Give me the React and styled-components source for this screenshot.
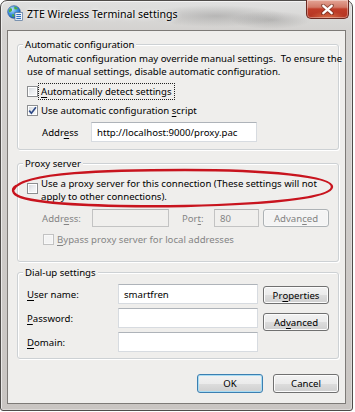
import React from "react";
import styled, { createGlobalStyle } from "styled-components";

const FONT = `"Noto Sans", "Liberation Sans", sans-serif`;

const GlobalStyle = createGlobalStyle`
  html, body { margin: 0; padding: 0; background: #ffffff; }
  body { font-family: ${FONT}; color: #000; }
  * { box-sizing: border-box; }
  u { text-decoration-thickness: 1px; text-underline-offset: 1.5px; }
`;

const Window = styled.div`
  position: relative;
  width: 353px;
  height: 411px;
  display: flex;
  flex-direction: column;
  padding: 0 6px 6px;
  border: 1px solid #4f4c4a;
  border-radius: 7px 7px 3px 3px;
  background:
    radial-gradient(ellipse 70px 11px at 215px 15px, rgba(110, 110, 110, 0.32), transparent),
    radial-gradient(ellipse 40px 9px at 270px 19px, rgba(100, 100, 100, 0.28), transparent),
    linear-gradient(to bottom, #e0e0e0 0px, #d3d1cf 30px, #c9c5c2 100%);
  box-shadow: inset 1px 1px 0 rgba(255, 255, 255, 0.6), inset -1px -1px 0 rgba(255, 255, 255, 0.35);
`;

const TitleBar = styled.div`
  flex: none;
  height: 29px;
  display: flex;
  align-items: flex-start;
`;

const AppIcon = styled.svg`
  flex: none;
  width: 16px;
  height: 16px;
  margin-top: 4px;
`;

const Title = styled.div`
  flex: 1;
  margin: 5px 0 0 4px;
  font-size: 10.6px;
  line-height: 16px;
  white-space: nowrap;
  color: #000;
  text-shadow: 0 0 6px rgba(255, 255, 255, 0.95), 0 0 3px rgba(255, 255, 255, 0.9);
`;

const CloseButton = styled.div`
  flex: none;
  width: 43px;
  height: 19px;
  margin: -1px -3px 0 0;
  display: flex;
  align-items: center;
  justify-content: center;
  border: 1px solid #6b2a22;
  border-top: none;
  border-radius: 0 0 5px 5px;
  background:
    radial-gradient(ellipse 18px 7px at 50% 100%, rgba(255, 170, 110, 0.5), transparent),
    linear-gradient(to bottom, #e4a596 0%, #d27a68 40%, #c03d29 50%, #b33522 100%);
  box-shadow: inset 0 0 0 1px rgba(255, 255, 255, 0.35);
`;

const Client = styled.div`
  flex: 1;
  display: flex;
  flex-direction: column;
  padding: 7px 6px 0 9px;
  background: #efeeec;
  border: 1px solid #7d7a77;
`;

const Group = styled.fieldset`
  margin: ${(p) => p.$mt || 0}px 0 0;
  padding: 0 9px ${(p) => p.$pb}px 9px;
  min-width: 0;
  border: 1px solid #cdd1d4;
  border-radius: 3px;
  box-shadow: inset 1px 1px 0 #ffffff, 1px 1px 0 #ffffff;
  display: flex;
  flex-direction: column;
`;

const Legend = styled.legend`
  margin-left: -4px;
  padding: 0 2px;
  font-size: 9.6px;
  line-height: 13px;
  background: #efeeec;
`;

const Text = styled.div`
  margin-top: ${(p) => p.$mt || 0}px;
  font-size: 9.6px;
  line-height: ${(p) => p.$lh || 13}px;
  white-space: pre;
  color: ${(p) => (p.$disabled ? "#858585" : "#000")};
`;

const CheckRow = styled.div`
  margin: ${(p) => p.$mt || 0}px 0 0 ${(p) => p.$indent || 0}px;
  display: flex;
  align-items: ${(p) => (p.$top ? "flex-start" : "center")};
  gap: 2px;
  min-height: 13px;
`;

const Box = styled.span`
  flex: none;
  position: relative;
  width: 11px;
  height: 11px;
  margin-top: ${(p) => p.$mt || 0}px;
  border: 1px solid ${(p) => (p.$disabled ? "#c2c2c2" : "#8c8e90")};
  background: ${(p) =>
    p.$disabled ? "#f3f3f3" : "linear-gradient(135deg, #d3d7dc 0%, #eef0f2 55%, #fafafa 100%)"};
  box-shadow: inset 0 0 0 1px ${(p) => (p.$disabled ? "#f8f8f8" : "#ffffff")};
  display: flex;
  align-items: center;
  justify-content: center;
`;

const CheckLabel = styled.span`
  padding: 0 1px;
  font-size: 9.6px;
  line-height: ${(p) => p.$lh || 13}px;
  white-space: pre;
  color: ${(p) => (p.$disabled ? "#858585" : "#000")};
  outline: ${(p) => (p.$focus ? "1px dotted #222" : "none")};
  outline-offset: 1px;
`;

const FieldRow = styled.div`
  margin: ${(p) => p.$mt || 0}px 0 0 ${(p) => p.$indent || 0}px;
  display: flex;
  align-items: center;
`;

const FieldLabel = styled.span`
  flex: none;
  width: ${(p) => p.$w}px;
  margin-left: ${(p) => p.$ml || 0}px;
  font-size: 9.6px;
  line-height: 13px;
  white-space: pre;
  color: ${(p) => (p.$disabled ? "#858585" : "#000")};
`;

const TextBox = styled.div`
  flex: none;
  width: ${(p) => p.$w}px;
  height: ${(p) => p.$h || 20}px;
  margin-left: ${(p) => p.$ml || 0}px;
  padding: 0 5px;
  display: flex;
  align-items: center;
  font-size: 9.6px;
  white-space: pre;
  color: ${(p) => (p.$disabled ? "#858585" : "#000")};
  background: ${(p) => (p.$disabled ? "#f0efed" : "#ffffff")};
  border: 1px solid ${(p) => (p.$disabled ? "#c3c3c3" : "#d7dbe0")};
  border-top-color: ${(p) => (p.$disabled ? "#b3b3b3" : "#aeb3b9")};
`;

const Button = styled.div`
  flex: none;
  width: ${(p) => p.$w || 66}px;
  height: ${(p) => p.$h || 18}px;
  margin-left: ${(p) => p.$ml || 0}px;
  display: flex;
  align-items: center;
  justify-content: center;
  font-size: 9.6px;
  white-space: pre;
  border-radius: 3px;
  color: ${(p) => (p.$disabled ? "#838383" : "#000")};
  border: 1px solid ${(p) => (p.$disabled ? "#adb2b5" : p.$default ? "#3c7fb1" : "#707070")};
  background: ${(p) =>
    p.$disabled
      ? "#f4f4f4"
      : "linear-gradient(to bottom, #f2f2f2 0%, #ebebeb 50%, #dddddd 50%, #cfcfcf 100%)"};
  box-shadow: inset 0 0 0 1px ${(p) => (p.$disabled ? "#f8f8f8" : p.$default ? "#a9dcf3" : "#fcfcfc")};
`;

const DialRow = styled.div`
  margin-top: 5px;
  display: flex;
  align-items: flex-start;
`;

const DialFields = styled.div`
  display: flex;
  flex-direction: column;
  gap: 4px;
`;

const DialButtons = styled.div`
  display: flex;
  flex-direction: column;
  gap: 9px;
  padding-top: 2px;
  margin-left: 5px;
`;

const DialogButtons = styled.div`
  margin-top: 15px;
  display: flex;
  justify-content: flex-end;
  gap: 10px;
`;

const Annotation = styled.svg`
  position: absolute;
  left: -1px;
  top: -1px;
  width: 353px;
  height: 411px;
  pointer-events: none;
`;

function Check({ checked, disabled, mt }) {
  return (
    <Box $disabled={disabled} $mt={mt}>
      {checked && (
        <svg width="9" height="9" viewBox="0 0 9 9">
          <path d="M1.2 4.6 L3.4 7.2 L7.9 1.3" fill="none" stroke="#2f4a86" strokeWidth="1.7" />
        </svg>
      )}
    </Box>
  );
}

export default function App() {
  return (
    <>
      <GlobalStyle />
      <Window>
        <TitleBar>
          <AppIcon viewBox="0 0 16 16">
            <defs>
              <radialGradient id="globe" cx="35%" cy="30%" r="75%">
                <stop offset="0%" stopColor="#bfe4ff" />
                <stop offset="55%" stopColor="#3a8ee0" />
                <stop offset="100%" stopColor="#1d5aa8" />
              </radialGradient>
            </defs>
            <circle cx="7" cy="7" r="6.3" fill="url(#globe)" stroke="#1f4f8f" strokeWidth="0.6" />
            <path d="M3 3.5 C4.5 3 5.5 4 5 5.5 C4.5 7 3 6.5 2.2 7.5 C1.6 6 2 4.5 3 3.5 Z" fill="#4fae3c" />
            <path d="M7.5 1.5 C9 1.8 10.5 2.8 11 4 C9.8 4.4 8.8 3.8 8 4.5 C7.2 3.8 7 2.5 7.5 1.5 Z" fill="#4fae3c" />
            <path d="M5.5 9 C6.8 8.6 7.6 9.8 7 11.5 C6.2 12.3 5.2 11.5 5.2 10.5 Z" fill="#4fae3c" />
            <rect x="8" y="7.5" width="7.3" height="8" fill="#f4f8fc" stroke="#4d6f99" strokeWidth="0.7" />
            <rect x="9.3" y="9" width="4.7" height="1.1" fill="#2f6fc0" />
            <rect x="9.3" y="11" width="4.7" height="1.1" fill="#2f6fc0" />
            <rect x="9.3" y="13" width="4.7" height="1.1" fill="#2f6fc0" />
          </AppIcon>
          <Title>ZTE Wireless Terminal settings</Title>
          <CloseButton>
            <svg width="13" height="11" viewBox="0 0 13 11">
              <path d="M2 1.5 L11 9.5 M11 1.5 L2 9.5" stroke="#5a2418" strokeWidth="4" strokeLinecap="round" opacity="0.55" />
              <path d="M2.3 1.8 L10.7 9.2 M10.7 1.8 L2.3 9.2" stroke="#ffffff" strokeWidth="2.3" strokeLinecap="round" />
            </svg>
          </CloseButton>
        </TitleBar>

        <Client>
          <Group $pb={7}>
            <Legend>Automatic configuration</Legend>
            <Text $mt={1}>
              {"Automatic configuration may override manual settings.  To ensure the\nuse of manual settings, disable automatic configuration."}
            </Text>
            <CheckRow $mt={7}>
              <Check />
              <CheckLabel $focus>
                <u>A</u>utomatically detect settings
              </CheckLabel>
            </CheckRow>
            <CheckRow $mt={6}>
              <Check checked />
              <CheckLabel>
                Use automatic configuration <u>s</u>cript
              </CheckLabel>
            </CheckRow>
            <FieldRow $mt={5} $indent={15}>
              <FieldLabel $w={49}>
                Addr<u>e</u>ss
              </FieldLabel>
              <TextBox $w={166}>http://localhost:9000/proxy.pac</TextBox>
            </FieldRow>
          </Group>

          <Group $mt={7} $pb={15}>
            <Legend>Proxy server</Legend>
            <CheckRow $mt={8} $top>
              <Check mt={5} />
              <CheckLabel $lh={12.5}>
                {"Use a proxy server for this connection (These settings will not\napply to other connections)."}
              </CheckLabel>
            </CheckRow>
            <FieldRow $mt={6} $indent={15}>
              <FieldLabel $w={50} $disabled>
                Addr<u>e</u>ss:
              </FieldLabel>
              <TextBox $w={77} $h={18} $disabled />
              <FieldLabel $w={32} $ml={13} $disabled>
                Por<u>t</u>:
              </FieldLabel>
              <TextBox $w={45} $h={18} $disabled>
                80
              </TextBox>
              <Button $ml={4} $disabled>
                Advan<u>c</u>ed
              </Button>
            </FieldRow>
            <CheckRow $mt={6} $indent={16}>
              <Check disabled />
              <CheckLabel $disabled>
                <u>B</u>ypass proxy server for local addresses
              </CheckLabel>
            </CheckRow>
          </Group>

          <Group $mt={4} $pb={6}>
            <Legend>Dial-up settings</Legend>
            <DialRow>
              <DialFields>
                <FieldRow>
                  <FieldLabel $w={91}>
                    <u>U</u>ser name:
                  </FieldLabel>
                  <TextBox $w={140}>smartfren</TextBox>
                </FieldRow>
                <FieldRow>
                  <FieldLabel $w={91}>
                    <u>P</u>assword:
                  </FieldLabel>
                  <TextBox $w={140} />
                </FieldRow>
                <FieldRow>
                  <FieldLabel $w={91}>
                    <u>D</u>omain:
                  </FieldLabel>
                  <TextBox $w={140} />
                </FieldRow>
              </DialFields>
              <DialButtons>
                <Button>
                  Pr<u>o</u>perties
                </Button>
                <Button>
                  Ad<u>v</u>anced
                </Button>
              </DialButtons>
            </DialRow>
          </Group>

          <DialogButtons>
            <Button $default $h={19}>OK</Button>
            <Button $h={19}>Cancel</Button>
          </DialogButtons>
        </Client>

        <Annotation viewBox="0 0 353 411">
          <path
            d="M14 189 C 22 172, 110 170, 185 170 C 265 170, 333 176, 332 187 C 331 198, 270 204, 185 206 C 100 207, 22 204, 14 193 C 12 190, 13 188, 16 186"
            fill="none"
            stroke="#c8141e"
            strokeWidth="2.4"
            strokeLinecap="round"
          />
        </Annotation>
      </Window>
    </>
  );
}
